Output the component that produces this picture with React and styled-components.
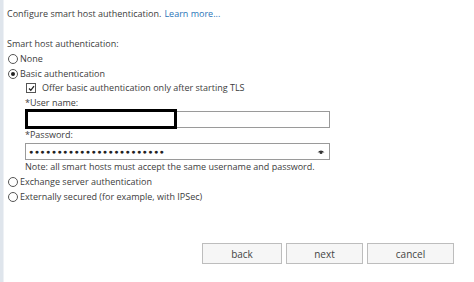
import React from 'react'
import styled, { createGlobalStyle } from 'styled-components'

const Global = createGlobalStyle`
  html, body {
    margin: 0;
    padding: 0;
    background: #fff;
  }
  body {
    font-family: "Open Sans", "Noto Sans", sans-serif;
    color: #3c3c3c;
  }
`

const Page = styled.div`
  display: flex;
  width: 474px;
  height: 282px;
  overflow: hidden;
`

const SideStrip = styled.div`
  width: 3px;
  flex: none;
  background: #dfe5ec;
  border-right: 1px solid #eef1f5;
`

const Content = styled.div`
  flex: 1;
  padding: 6px 0 0 3px;
  display: flex;
  flex-direction: column;
  font-size: 9px;
`

const Line = styled.div`
  line-height: ${({ $h }) => $h || 15}px;
  height: ${({ $h }) => $h || 15}px;
  margin-top: ${({ $mt }) => $mt || 0}px;
  padding-left: ${({ $indent }) => $indent || 0}px;
  white-space: nowrap;
  display: flex;
  align-items: center;
`

const Link = styled.a`
  color: #2a74b8;
  text-decoration: none;
  margin-left: 3px;
`

const Radio = styled.span`
  width: 8px;
  height: 8px;
  border: 1px solid #555;
  border-radius: 50%;
  margin: 0 2px 0 1px;
  position: relative;
  flex: none;
  &::after {
    content: "";
    display: ${({ $on }) => ($on ? 'block' : 'none')};
    position: absolute;
    left: 2px;
    top: 2px;
    width: 4px;
    height: 4px;
    border-radius: 50%;
    background: #222;
  }
`

const Check = styled.span`
  width: 8px;
  height: 8px;
  border: 1px solid #555;
  margin-right: 6px;
  display: flex;
  align-items: center;
  justify-content: center;
  flex: none;
`

const Field = styled.div`
  position: relative;
  margin-left: 18px;
  height: 15px;
  border: 1px solid #9a9a9a;
  margin-top: 1px;
  display: flex;
  align-items: center;
  padding: 0 4px 0 3px;
  box-sizing: content-box;
  width: 296px;
`

const Redacted = styled.div`
  position: absolute;
  left: -1px;
  top: -3px;
  width: 146px;
  height: 14px;
  border: 3px solid #000;
  background: #fff;
`

const Dots = styled.span`
  flex: 1;
  font-size: 7px;
  letter-spacing: 1.45px;
  color: #222;
`

const Buttons = styled.div`
  display: flex;
  gap: 4px;
  margin-top: 39px;
  padding-left: 195px;
`

const Button = styled.button`
  width: ${({ $w }) => $w}px;
  height: 21px;
  border: 1px solid #bdbdbd;
  background: #f6f6f6;
  color: #444;
  font-family: "Open Sans", "Noto Sans", sans-serif;
  font-size: 10px;
  padding: 0;
`

export default function App() {
  return (
    <>
      <Global />
      <Page>
        <SideStrip />
        <Content>
          <Line>
            Configure smart host authentication.<Link href="#">Learn more...</Link>
          </Line>
          <Line $mt={15}>Smart host authentication:</Line>
          <Line><Radio />None</Line>
          <Line><Radio $on />Basic authentication</Line>
          <Line $indent={19} $h={14}>
            <Check>
              <svg width="7" height="7" viewBox="0 0 7 7">
                <path d="M1 3.5 L2.8 5.3 L6 1.2" fill="none" stroke="#222" strokeWidth="1.3" />
              </svg>
            </Check>
            Offer basic authentication only after starting TLS
          </Line>
          <Line $indent={18}>*User name:</Line>
          <Field>
            <Redacted />
          </Field>
          <Line $indent={18} $h={14}>*Password:</Line>
          <Field>
            <Dots>●●●●●●●●●●●●●●●●●●●●●●●●</Dots>
            <svg width="8" height="6" viewBox="0 0 8 6">
              <path d="M0.5 3.5 Q4 -0.5 7.5 3.5 Q4 2.5 0.5 3.5Z" fill="#333" />
              <circle cx="4" cy="3.6" r="1.5" fill="#333" />
            </svg>
          </Field>
          <Line $indent={18} $h={14}>Note: all smart hosts must accept the same username and password.</Line>
          <Line><Radio />Exchange server authentication</Line>
          <Line><Radio />Externally secured (for example, with IPSec)</Line>
          <Buttons>
            <Button $w={80}>back</Button>
            <Button $w={77}>next</Button>
            <Button $w={87}>cancel</Button>
          </Buttons>
        </Content>
      </Page>
    </>
  )
}
